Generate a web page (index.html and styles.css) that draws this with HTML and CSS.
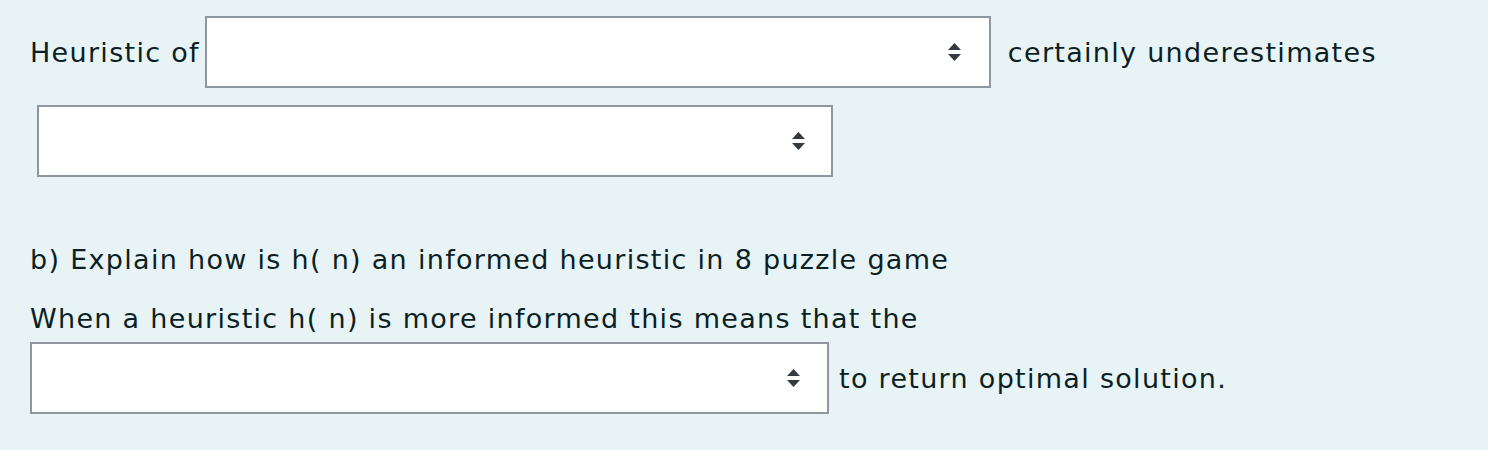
FILE: index.html
```html
<!DOCTYPE html>
<html>
<head>
<meta charset="utf-8">
<link rel="stylesheet" href="styles.css">
</head>
<body>
<div class="page">
  <div class="row row1">
    <span class="txt">Heuristic of</span>
    <div class="select sel1"><svg class="arrow" width="13" height="18" viewBox="0 0 13 18"><polygon points="0,7 6.5,0 13,7"/><polygon points="0,11 13,11 6.5,18"/></svg></div>
    <span class="txt after1">certainly underestimates</span>
  </div>
  <div class="row row2">
    <div class="select sel2"><svg class="arrow" width="13" height="18" viewBox="0 0 13 18"><polygon points="0,7 6.5,0 13,7"/><polygon points="0,11 13,11 6.5,18"/></svg></div>
  </div>
  <p class="para pb">b) Explain how is h( n) an informed heuristic in 8 puzzle game</p>
  <p class="para pw">When a heuristic h( n) is more informed this means that the</p>
  <div class="row row3">
    <div class="select sel3"><svg class="arrow" width="13" height="18" viewBox="0 0 13 18"><polygon points="0,7 6.5,0 13,7"/><polygon points="0,11 13,11 6.5,18"/></svg></div>
    <span class="txt after3">to return optimal solution.</span>
  </div>
</div>
</body>
</html>
```
FILE: styles.css
```css
html, body {
  margin: 0;
  padding: 0;
  background: #e7f3f5;
}
.page {
  padding: 16px 0 0 30px;
  font-family: "DejaVu Sans", sans-serif;
  font-size: 27px;
  letter-spacing: 1.3px;
  color: #0b1f24;
  height: 434px;
}
.row {
  display: flex;
  align-items: center;
}
.select {
  box-sizing: border-box;
  height: 72px;
  background: #ffffff;
  border: 2px solid #90969f;
  display: flex;
  align-items: center;
  justify-content: flex-end;
}
.arrow {
  fill: #343a40;
  display: block;
}
.sel1 {
  width: 786px;
  margin-left: 5px;
  padding-right: 28px;
}
.after1 {
  margin-left: 17px;
}
.row2 {
  margin-top: 17px;
}
.sel2 {
  width: 796px;
  margin-left: 7px;
  padding-right: 26px;
}
.para {
  margin: 0;
  line-height: 44px;
}
.pb {
  margin-top: 61px;
}
.pw {
  margin-top: 15px;
}
.row3 {
  margin-top: 1px;
}
.sel3 {
  width: 799px;
  padding-right: 27px;
}
.after3 {
  margin-left: 10px;
}
```
